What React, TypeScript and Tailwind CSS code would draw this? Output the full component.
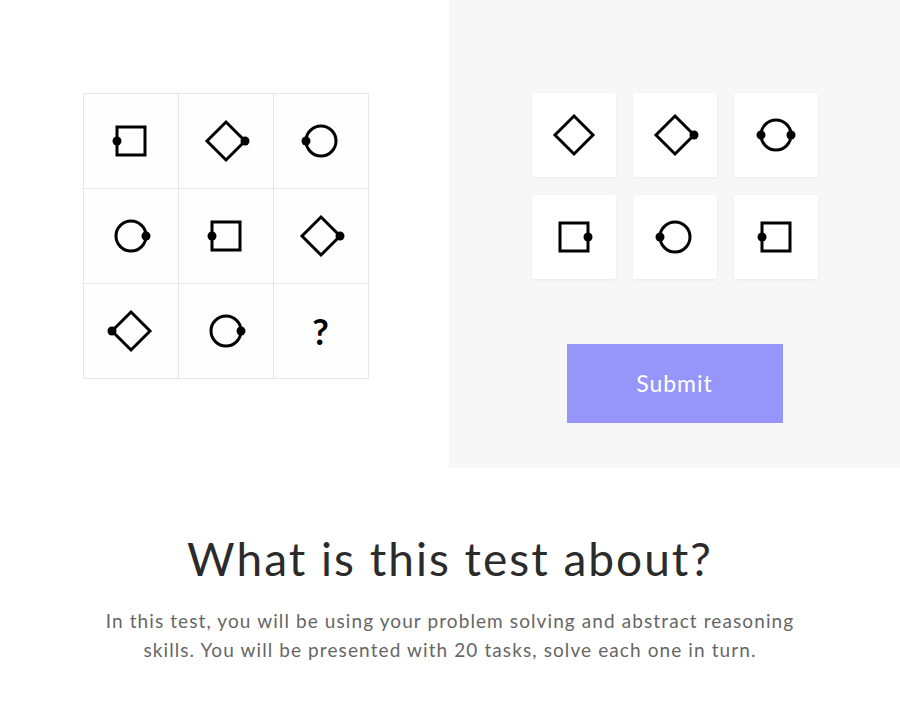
type ShapeKind = 'square' | 'diamond' | 'circle';
type Dot = 'left' | 'right';

function Shape({ kind, dots = [] }: { kind: ShapeKind; dots?: Dot[] }) {
  const dotPos = (d: Dot) => {
    if (kind === 'square') return d === 'left' ? 10 : 38;
    if (kind === 'diamond') return d === 'left' ? 5 : 43;
    return d === 'left' ? 9 : 39;
  };
  return (
    <svg width="48" height="48" viewBox="0 0 48 48" fill="none" stroke="#000" strokeWidth="3">
      {kind === 'square' && <rect x="10" y="10" width="28" height="28" />}
      {kind === 'diamond' && <polygon points="24,5 43,24 24,43 5,24" strokeLinejoin="miter" />}
      {kind === 'circle' && <circle cx="24" cy="24" r="15" />}
      {dots.map((d) => (
        <circle key={d} cx={dotPos(d)} cy="24" r="4.5" fill="#000" stroke="none" />
      ))}
    </svg>
  );
}

const puzzle: ({ kind: ShapeKind; dots: Dot[] } | null)[] = [
  { kind: 'square', dots: ['left'] },
  { kind: 'diamond', dots: ['right'] },
  { kind: 'circle', dots: ['left'] },
  { kind: 'circle', dots: ['right'] },
  { kind: 'square', dots: ['left'] },
  { kind: 'diamond', dots: ['right'] },
  { kind: 'diamond', dots: ['left'] },
  { kind: 'circle', dots: ['right'] },
  null,
];

const options: { kind: ShapeKind; dots: Dot[] }[] = [
  { kind: 'diamond', dots: [] },
  { kind: 'diamond', dots: ['right'] },
  { kind: 'circle', dots: ['left', 'right'] },
  { kind: 'square', dots: ['right'] },
  { kind: 'circle', dots: ['left'] },
  { kind: 'square', dots: ['left'] },
];

export default function App() {
  return (
    <div className="min-h-screen bg-white" style={{ fontFamily: 'Lato, "Noto Sans", sans-serif' }}>
      <div className="grid grid-cols-[449px_1fr] h-[468px]">
        {/* Puzzle grid */}
        <div className="flex items-center justify-center pl-[2px] pt-[3px]">
          <div className="grid grid-cols-3 border-l border-t border-[#e6e6e6]">
            {puzzle.map((cell, i) => (
              <div
                key={i}
                className="w-[95px] h-[95px] flex items-center justify-center border-r border-b border-[#e6e6e6] bg-[#fefefe]"
              >
                {cell ? (
                  <Shape kind={cell.kind} dots={cell.dots} />
                ) : (
                  <span className="text-[36px] font-bold text-black leading-none">?</span>
                )}
              </div>
            ))}
          </div>
        </div>

        {/* Answers */}
        <div className="bg-[#f7f7f7] flex flex-col items-center pt-[93px]">
          <div className="grid grid-cols-3 gap-x-[17px] gap-y-[18px]">
            {options.map((o, i) => (
              <button
                key={i}
                className="w-[84px] h-[84px] bg-white flex items-center justify-center rounded-[2px] shadow-[0_1px_3px_rgba(0,0,0,0.06)]"
              >
                <Shape kind={o.kind} dots={o.dots} />
              </button>
            ))}
          </div>
          <button className="mt-[65px] w-[216px] h-[79px] bg-[#9696fa] text-white text-[23px] tracking-[1px]">
            Submit
          </button>
        </div>
      </div>

      <div className="flex flex-col items-center text-center pt-[63px]">
        <h1 className="text-[46px] leading-[56px] text-[#2b2b2b] font-normal tracking-[2px]">
          What is this test about?
        </h1>
        <p className="mt-[19px] w-[720px] text-[19px] leading-[29px] text-[#666] tracking-[1.1px]">
          In this test, you will be using your problem solving and abstract reasoning skills. You will be presented
          with 20 tasks, solve each one in turn.
        </p>
      </div>
    </div>
  );
}
